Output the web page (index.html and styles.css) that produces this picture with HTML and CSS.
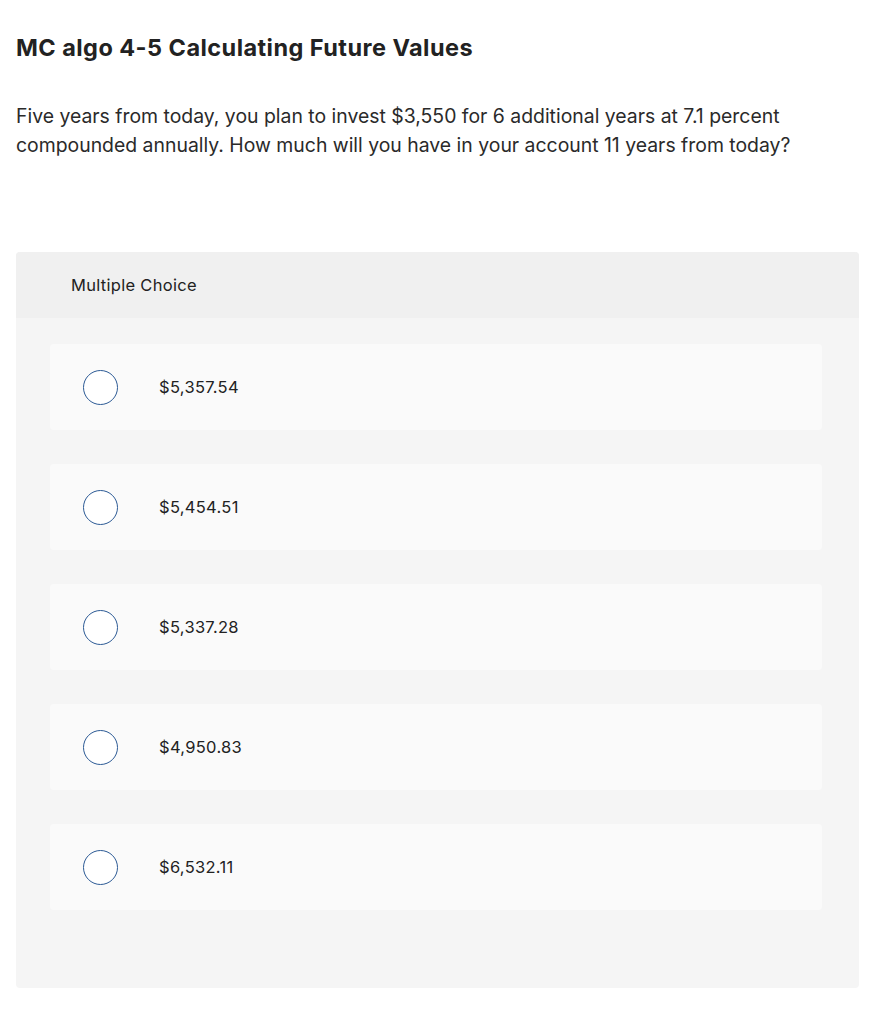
FILE: index.html
```html
<!DOCTYPE html>
<html>
<head>
<meta charset="utf-8">
<link rel="stylesheet" href="styles.css">
</head>
<body>
<div class="page">
  <h1 class="title">MC algo 4-5 Calculating Future Values</h1>
  <p class="question">Five years from today, you plan to invest $3,550 for 6 additional years at 7.1 percent compounded annually. How much will you have in your account 11 years from today?</p>
  <div class="panel">
    <div class="panel-head">Multiple Choice</div>
    <div class="panel-body">
      <div class="option"><span class="radio"></span><span class="label">$5,357.54</span></div>
      <div class="option"><span class="radio"></span><span class="label">$5,454.51</span></div>
      <div class="option"><span class="radio"></span><span class="label">$5,337.28</span></div>
      <div class="option"><span class="radio"></span><span class="label">$4,950.83</span></div>
      <div class="option"><span class="radio"></span><span class="label">$6,532.11</span></div>
    </div>
  </div>
</div>
</body>
</html>
```
FILE: styles.css
```css
html, body {
  margin: 0;
  padding: 0;
  background: #ffffff;
}
body {
  font-family: "Inter", "Liberation Sans", sans-serif;
  color: #2a2a2a;
}
.page {
  padding: 30px 19px 0 16px;
}
.title {
  margin: 0;
  font-size: 23.5px;
  font-weight: 700;
  letter-spacing: 0.45px;
  line-height: 36px;
  color: #222;
}
.question {
  margin: 36px 0 0;
  font-size: 19.4px;
  letter-spacing: 0;
  line-height: 29px;
  color: #2a2a2a;
}
.panel {
  margin-top: 92px;
  background: #f5f5f5;
  border-radius: 4px;
  overflow: hidden;
}
.panel-head {
  background: #f0f0f0;
  height: 66px;
  padding-left: 55px;
  display: flex;
  align-items: center;
  font-size: 16.5px;
  letter-spacing: 0.3px;
  color: #222;
}
.panel-body {
  padding: 26px 37px 78px 34px;
  display: flex;
  flex-direction: column;
  gap: 34px;
}
.option {
  background: #fafafa;
  border-radius: 4px;
  height: 86px;
  display: flex;
  align-items: center;
  padding-left: 33px;
}
.radio {
  width: 33px;
  height: 33px;
  border: 1.6px solid #2c5a95;
  border-radius: 50%;
  background: #fff;
  flex: none;
}
.label {
  margin-left: 41px;
  font-size: 16.5px;
  letter-spacing: 0.3px;
  color: #222;
}
```
